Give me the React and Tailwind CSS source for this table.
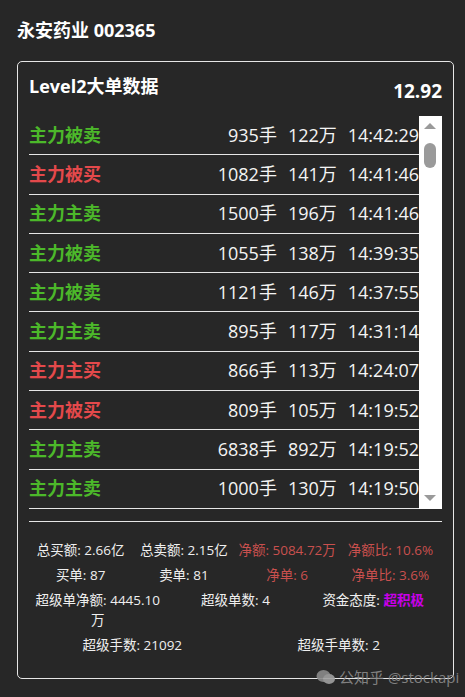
import React from "react";

const rows = [
  ["主力被卖", "g", "935手", "122万", "14:42:29"],
  ["主力被买", "r", "1082手", "141万", "14:41:46"],
  ["主力主卖", "g", "1500手", "196万", "14:41:46"],
  ["主力被卖", "g", "1055手", "138万", "14:39:35"],
  ["主力被卖", "g", "1121手", "146万", "14:37:55"],
  ["主力主卖", "g", "895手", "117万", "14:31:14"],
  ["主力主买", "r", "866手", "113万", "14:24:07"],
  ["主力被买", "r", "809手", "105万", "14:19:52"],
  ["主力主卖", "g", "6838手", "892万", "14:19:52"],
  ["主力主卖", "g", "1000手", "130万", "14:19:50"],
];

const FONT = { fontFamily: '"Open Sans","Noto Sans CJK SC",sans-serif' };

export default function App() {
  return (
    <div className="w-[465px] h-[697px] bg-[#272727] text-[#f2f2f2] overflow-hidden relative" style={FONT}>
      <div className="pl-[17px] pt-[17px]">
        <div className="text-[18px] font-bold leading-[26px] text-white">永安药业 002365</div>
        <div className="mt-[18px] w-[437px] h-[618px] border border-[#e6e6e6] rounded-[5px] px-[11px] pt-[12px] flex flex-col">
          <div className="flex justify-between items-start h-[42px]">
            <div className="text-[18px] font-bold leading-[25px] text-white">Level2大单数据</div>
            <div className="text-[19px] font-bold leading-[26px] mt-[4px] text-white">12.92</div>
          </div>
          <div className="flex h-[393px]">
            <div className="flex-1 flex flex-col">
              {rows.map((r, i) => (
                <div key={i} className="h-[39.3px] border-b border-[#e6e6e6] flex items-center justify-between">
                  <span className={`text-[18px] font-bold ${r[1] === "g" ? "text-[#4cb82a]" : "text-[#e4494b]"}`}>{r[0]}</span>
                  <span className="flex gap-[11px] text-[18px] text-[#f4f4f4]">
                    <span>{r[2]}</span>
                    <span>{r[3]}</span>
                    <span>{r[4]}</span>
                  </span>
                </div>
              ))}
            </div>
            <div className="w-[23px] bg-white relative">
              <div className="absolute left-[5px] top-[7px] w-0 h-0 border-l-[6px] border-r-[6px] border-b-[6px] border-l-transparent border-r-transparent border-b-[#9a9a9a]" />
              <div className="absolute left-[5px] top-[27px] w-[12px] h-[25px] rounded-[6px] bg-[#9a9a9a]" />
              <div className="absolute left-[5px] bottom-[8px] w-0 h-0 border-l-[6px] border-r-[6px] border-t-[6px] border-l-transparent border-r-transparent border-t-[#9a9a9a]" />
            </div>
          </div>
          <div className="mt-[12px] border-t border-[#e6e6e6]" />
          <div className="pt-[18px] flex flex-col gap-[5px] text-[13.5px] leading-[20px] text-center text-[#efefef]">
            <div className="grid grid-cols-4">
              <span>总买额: 2.66亿</span>
              <span>总卖额: 2.15亿</span>
              <span className="text-[#c9504e]">净额: 5084.72万</span>
              <span className="text-[#c9504e]">净额比: 10.6%</span>
            </div>
            <div className="grid grid-cols-4">
              <span>买单: 87</span>
              <span>卖单: 81</span>
              <span className="text-[#c9504e]">净单: 6</span>
              <span className="text-[#c9504e]">净单比: 3.6%</span>
            </div>
            <div className="grid grid-cols-3">
              <span className="px-[4px]">超级单净额: 4445.10万</span>
              <span>超级单数: 4</span>
              <span>资金态度: <span className="text-[#c800e8] font-bold">超积极</span></span>
            </div>
            <div className="grid grid-cols-2">
              <span>超级手数: 21092</span>
              <span>超级手单数: 2</span>
            </div>
          </div>
        </div>
      </div>
      <div className="absolute left-[316px] top-[666px] flex items-center gap-[3px] whitespace-nowrap text-[15px] leading-[22px] text-[#8a8a8a] opacity-90">
        <svg width="20" height="16" viewBox="0 0 20 16">
          <ellipse cx="7.5" cy="7" rx="7" ry="6" fill="#8a8a8a" />
          <ellipse cx="13" cy="10" rx="6" ry="5" fill="#a0a0a0" />
        </svg>
        <span>公知乎 @stockapi</span>
      </div>
    </div>
  );
}
